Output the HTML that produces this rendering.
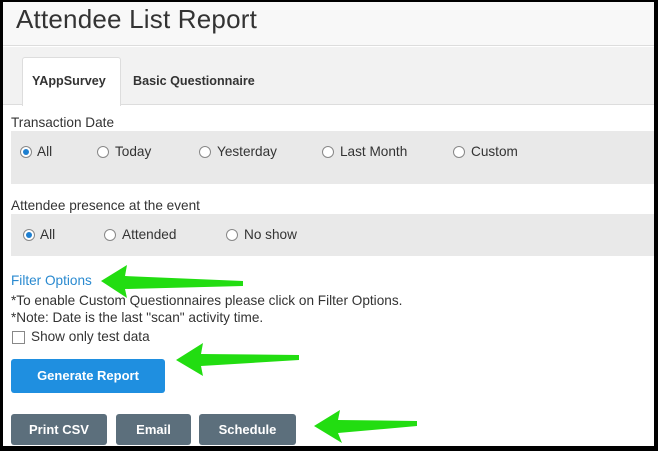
<!DOCTYPE html>
<html><head><meta charset="utf-8"><style>
*{margin:0;padding:0;box-sizing:border-box}
body{width:658px;height:451px;background:#000;position:relative;overflow:hidden;font-family:"Liberation Sans",sans-serif;color:#333}
.a{position:absolute}
.t{font-size:13.6px;color:#333;white-space:nowrap}
.r{position:absolute;width:12px;height:12px;border:1px solid #888;border-radius:50%;background:#fff}
.r.on::after{content:"";position:absolute;left:2px;top:2px;width:6px;height:6px;border-radius:50%;background:#1e7fd0}
.btn{position:absolute;color:#fff;font-weight:bold;font-size:13px;text-align:center;border-radius:3px}
.g{background:#5c6f7c;top:414px;height:31px;line-height:31px}
</style></head><body>
<div class="a" style="left:3px;top:2px;width:651px;height:444px;background:#fff"></div>
<div class="a" style="left:3px;top:2px;width:651px;height:44px;background:#f8f8f8;border-bottom:1px solid #ddd"></div>
<div class="a" style="left:16px;top:4px;font-size:26px;color:#333;letter-spacing:0.2px">Attendee List Report</div>
<div class="a" style="left:3px;top:47px;width:651px;height:58px;background:#f2f2f2;border-bottom:1px solid #ddd"></div>
<div class="a" style="left:22px;top:57px;width:99px;height:49px;background:#fff;border:1px solid #ddd;border-bottom:none;border-radius:3px 3px 0 0"></div>
<div class="a t" style="left:32px;top:74px;font-weight:bold;font-size:12.6px">YAppSurvey</div>
<div class="a t" style="left:133px;top:74px;font-weight:bold;font-size:12.6px">Basic Questionnaire</div>
<div class="a t" style="left:11px;top:115px">Transaction Date</div>
<div class="a" style="left:11px;top:131px;width:643px;height:53px;background:#e9e9e9"></div>
<div class="r on" style="left:20px;top:146px"></div><div class="a t" style="left:37px;top:144px">All</div>
<div class="r" style="left:97px;top:146px"></div><div class="a t" style="left:115px;top:144px">Today</div>
<div class="r" style="left:199px;top:146px"></div><div class="a t" style="left:217px;top:144px">Yesterday</div>
<div class="r" style="left:322px;top:146px"></div><div class="a t" style="left:340px;top:144px">Last Month</div>
<div class="r" style="left:453px;top:146px"></div><div class="a t" style="left:471px;top:144px">Custom</div>
<div class="a t" style="left:11px;top:198px">Attendee presence at the event</div>
<div class="a" style="left:11px;top:214px;width:643px;height:42px;background:#e9e9e9"></div>
<div class="r on" style="left:23px;top:229px"></div><div class="a t" style="left:40px;top:227px">All</div>
<div class="r" style="left:104px;top:229px"></div><div class="a t" style="left:122px;top:227px">Attended</div>
<div class="r" style="left:226px;top:229px"></div><div class="a t" style="left:244px;top:227px">No show</div>
<div class="a t" style="left:11px;top:273px;color:#2a8ad0">Filter Options</div>
<div class="a t" style="left:11px;top:293px">*To enable Custom Questionnaires please click on Filter Options.</div>
<div class="a t" style="left:11px;top:310px">*Note: Date is the last "scan" activity time.</div>
<div class="a" style="left:12px;top:331px;width:13px;height:13px;border:1px solid #888;background:#fff"></div>
<div class="a t" style="left:31px;top:329px">Show only test data</div>
<div class="btn" style="left:11px;top:359px;width:154px;height:34px;line-height:34px;background:#1f8fe0">Generate Report</div>
<div class="btn g" style="left:11px;width:96px">Print CSV</div>
<div class="btn g" style="left:116px;width:75px">Email</div>
<div class="btn g" style="left:199px;width:97px">Schedule</div>
<svg class="a" style="left:0;top:0" width="658" height="451">
<g fill="#22dd11">
<polygon points="101,281 127,265 125,276 243,281 243,286 125,289 127,298"/>
<polygon points="176,360 203,343 201,354 299,355 299,360 201,366 203,376"/>
<polygon points="314,426 340,410 338,420 417,421 417,426 338,433 342,443"/>
</g></svg>
</body></html>
